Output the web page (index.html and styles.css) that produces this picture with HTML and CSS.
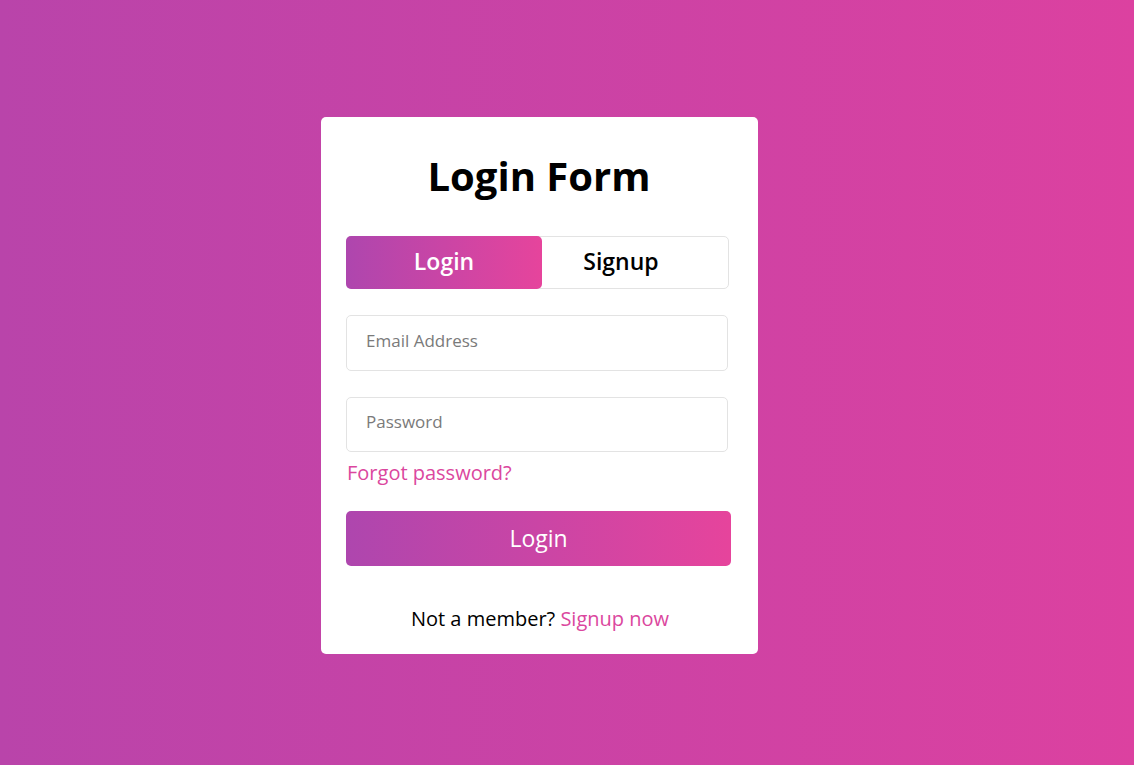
FILE: index.html
```html
<!DOCTYPE html>
<html>
<head>
<meta charset="utf-8">
<link rel="stylesheet" href="styles.css">
</head>
<body>
<div class="page">
  <div class="card">
    <h1 class="title">Login Form</h1>
    <div class="tabs">
      <div class="tab tab-active">Login</div>
      <div class="tab tab-other">Signup</div>
    </div>
    <form class="form">
      <input class="field" type="text" placeholder="Email Address">
      <input class="field" type="password" placeholder="Password">
      <a class="forgot" href="#">Forgot password?</a>
      <button class="submit" type="button">Login</button>
      <p class="signup">Not a member? <a href="#">Signup now</a></p>
    </form>
  </div>
</div>
</body>
</html>
```
FILE: styles.css
```css
* { box-sizing: border-box; }
html, body { margin: 0; padding: 0; }
body {
  font-family: "Open Sans", "Liberation Sans", sans-serif;
  background: linear-gradient(to right, #b944aa, #dc41a0);
  min-height: 765px;
}
.page {
  display: flex;
  justify-content: flex-start;
  padding-top: 117px;
  padding-left: 321px;
}
.card {
  width: 437px;
  height: 537px;
  background: #fff;
  border-radius: 5px;
  padding: 25px 26px 0 25px;
}
.title {
  margin: 0;
  text-align: center;
  font-size: 40px;
  font-weight: 700;
  line-height: 1;
  padding-top: 14px;
  color: #000;
}
.tabs {
  margin-top: 40px;
  display: flex;
  width: 383px;
  height: 53px;
  border: 1px solid #e3e3e3;
  border-radius: 5px;
}
.tab {
  display: flex;
  align-items: center;
  justify-content: center;
  font-size: 23px;
  font-weight: 600;
  color: #000;
  padding-bottom: 3px;
}
.tab-active {
  flex: 0 0 196px;
  margin: -1px 0 -1px -1px;
  color: #fff;
  border-radius: 5px;
  background: linear-gradient(to right, #ae46ae, #e6449c);
}
.tab-other {
  flex: 1;
  padding-right: 28px;
}
.form {
  display: flex;
  flex-direction: column;
  align-items: flex-start;
}
.field {
  margin-top: 26px;
  width: 382px;
  height: 56px;
  border: 1px solid #e3e3e3;
  border-radius: 5px;
  padding: 0 0 6px 19px;
  font-family: inherit;
  font-size: 17px;
  color: #333;
  outline: none;
}
.field + .field { height: 55px; }
.field::placeholder { color: #7a7a7a; }
.forgot {
  margin-top: 6px;
  margin-left: 1px;
  font-size: 20px;
  line-height: 30px;
  color: #db479e;
  text-decoration: none;
}
.submit {
  margin-top: 23px;
  width: 385px;
  height: 55px;
  border: none;
  border-radius: 5px;
  background: linear-gradient(to right, #ae46ae, #e6449c);
  color: #fff;
  font-family: inherit;
  font-size: 23px;
  font-weight: 400;
  padding: 0 0 2px 0;
}
.signup {
  margin: 38px 0 0 0;
  align-self: stretch;
  text-align: center;
  font-size: 20px;
  line-height: 30px;
  color: #000;
  padding-left: 2px;
}
.signup a { color: #db479e; text-decoration: none; }
```
